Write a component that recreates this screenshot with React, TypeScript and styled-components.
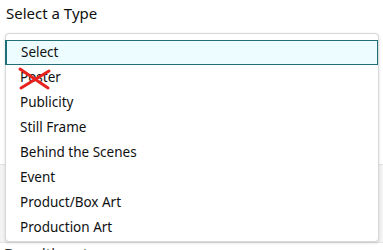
import React from "react"
import styled, { createGlobalStyle } from "styled-components"

const GlobalStyle = createGlobalStyle`
  html, body {
    margin: 0;
    padding: 0;
    background: #ffffff;
    font-family: "Noto Sans", "Open Sans", Arial, sans-serif;
    color: #0f1111;
    overflow: hidden;
  }
`

const Page = styled.div`
  position: relative;
  width: 383px;
  height: 250px;
  overflow: hidden;
`

const Title = styled.div`
  padding: 2px 0 0 6px;
  font-size: 15px;
  line-height: 22px;
  color: #0f1111;
`

// what lies behind the open list
const Behind = styled.div`
  margin-top: 140px;
  height: 77px;
  background: #f3f3f3;
  border-top: 1px solid #e3e3e3;
  border-bottom: 1px solid #e3e3e3;
`

const BehindText = styled.div`
  padding: 1px 0 0 4px;
  font-size: 15px;
  line-height: 18px;
  color: #333;
`

const Menu = styled.ul`
  position: absolute;
  left: 5px;
  top: 33px;
  width: 374px;
  height: 209px;
  margin: 0;
  padding: 6px 0 0;
  list-style: none;
  background: #ffffff;
  border: 1px solid #d5d9d9;
  border-radius: 4px;
  box-shadow: 0 1px 3px rgba(15, 17, 17, 0.15);
  box-sizing: border-box;
`

const Item = styled.li<{ $active?: boolean }>`
  position: relative;
  height: 25px;
  margin-left: ${({ $active }) => ($active ? "-1px" : "0")};
  padding-left: 14px;
  font-size: 13.5px;
  line-height: 23px;
  box-sizing: border-box;
  background: ${({ $active }) => ($active ? "#edfdff" : "transparent")};
  border: ${({ $active }) => ($active ? "1px solid #1f6e78" : "1px solid transparent")};
  border-left-width: ${({ $active }) => ($active ? "2px" : "0")};
`

const Cross = styled.svg`
  position: absolute;
  left: 12px;
  top: 1px;
`

const items = [
  "Poster",
  "Publicity",
  "Still Frame",
  "Behind the Scenes",
  "Event",
  "Product/Box Art",
  "Production Art",
]

export default function App() {
  return (
    <Page>
      <GlobalStyle />
      <Title>Select a Type</Title>
      <Behind />
      <BehindText>Breadth notes</BehindText>
      <Menu>
        <Item $active>Select</Item>
        {items.map((name) => (
          <Item key={name}>
            {name}
            {name === "Poster" ? (
              <Cross width="34" height="24" viewBox="0 0 34 24">
                <path d="M2 2 L30 21" stroke="#e8231f" strokeWidth="3" strokeLinecap="round" />
                <path d="M3 21 L31 4" stroke="#e8231f" strokeWidth="3" strokeLinecap="round" />
              </Cross>
            ) : null}
          </Item>
        ))}
      </Menu>
    </Page>
  )
}
